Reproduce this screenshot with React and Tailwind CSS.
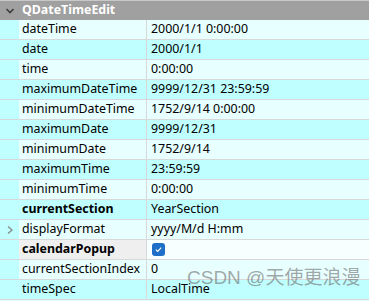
import React from "react";

const rows = [
  { name: "dateTime", value: "2000/1/1 0:00:00" },
  { name: "date", value: "2000/1/1" },
  { name: "time", value: "0:00:00" },
  { name: "maximumDateTime", value: "9999/12/31 23:59:59" },
  { name: "minimumDateTime", value: "1752/9/14 0:00:00" },
  { name: "maximumDate", value: "9999/12/31" },
  { name: "minimumDate", value: "1752/9/14" },
  { name: "maximumTime", value: "23:59:59" },
  { name: "minimumTime", value: "0:00:00" },
  { name: "currentSection", value: "YearSection", bold: true },
  { name: "displayFormat", value: "yyyy/M/d H:mm", expand: true },
  { name: "calendarPopup", check: true, bold: true, selected: true },
  { name: "currentSectionIndex", value: "0" },
  { name: "timeSpec", value: "LocalTime" },
];

function Fila({ fila, i }) {
  const fondo = i % 2 === 1 ? "bg-[#bfffff]" : "bg-[#e8ffff]";
  return (
    <div className="flex h-[20px] border-b border-[#d8d8d8]">
      <div className="w-[19px] shrink-0 bg-[#bfffff] flex items-center justify-center">
        {fila.expand && (
          <svg width="8" height="10" viewBox="0 0 8 10">
            <path d="M2 1.5 L6 5 L2 8.5" fill="none" stroke="#8a8a8a" strokeWidth="1.3" />
          </svg>
        )}
      </div>
      <div
        className={`w-[128px] shrink-0 border-r border-[#d8d8d8] pl-[3px] flex items-center ${
          fila.selected ? "bg-[#efefef]" : fondo
        } ${fila.bold ? "font-bold" : ""}`}
      >
        {fila.name}
      </div>
      <div className={`flex-1 pl-[4px] flex items-center ${fila.selected ? "bg-[#f8ffff]" : fondo}`}>
        {fila.check ? (
          <span className="w-[13px] h-[13px] rounded-[3px] bg-[#1e6fc8] flex items-center justify-center ml-[1px]">
            <svg width="9" height="9" viewBox="0 0 9 9">
              <path d="M1.8 4.6 L3.7 6.4 L7.2 2.6" fill="none" stroke="white" strokeWidth="1.2" />
            </svg>
          </span>
        ) : (
          fila.value
        )}
      </div>
    </div>
  );
}

export default function App() {
  return (
    <div
      className="relative w-[369px] h-[301px] overflow-hidden bg-[#e8ffff] text-[12.4px] text-black leading-none"
      style={{ fontFamily: "'Noto Sans', 'Noto Sans CJK SC', sans-serif" }}
    >
      <div className="flex items-center h-[20px] bg-[#a0a0a0] border-t border-[#c8c8c8]">
        <div className="w-[19px] shrink-0 flex items-center justify-center">
          <svg width="10" height="8" viewBox="0 0 10 8">
            <path d="M1.5 2 L5 5.5 L8.5 2" fill="none" stroke="#3c3c3c" strokeWidth="1.6" />
          </svg>
        </div>
        <span className="pl-[3px] font-bold text-white">QDateTimeEdit</span>
      </div>
      {rows.map((fila, i) => (
        <Fila key={fila.name} fila={fila} i={i} />
      ))}
      <div
        className="absolute left-[187px] top-[268px] text-[19px] text-[#6e6e6e]/60 whitespace-nowrap"
        style={{ fontFamily: "'Liberation Sans', 'Noto Sans CJK SC', sans-serif" }}
      >
        CSDN @天使更浪漫
      </div>
    </div>
  );
}
